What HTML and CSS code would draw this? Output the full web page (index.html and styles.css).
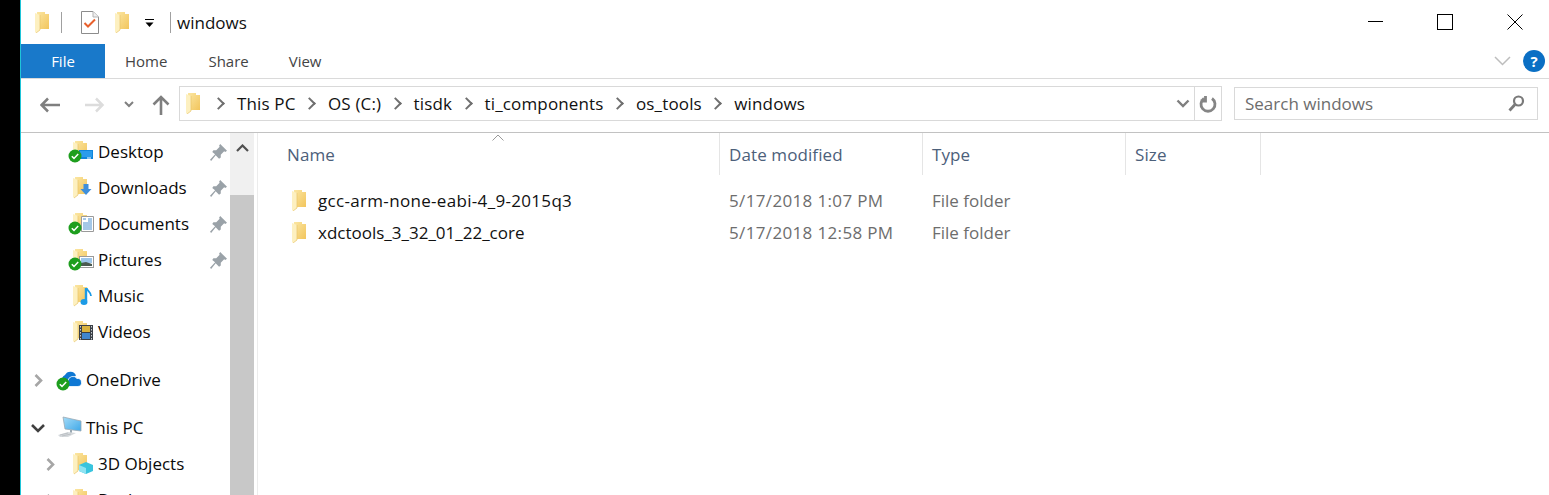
FILE: index.html
```html
<!DOCTYPE html>
<html lang="en">
<head>
    <meta charset="UTF-8">
    <title>windows</title>
    <link rel="stylesheet" href="styles.css">
</head>
<body>
    <svg class="defs" width="0" height="0">
        <defs>
            <linearGradient id="fold" x1="0" y1="0" x2="1" y2="1">
                <stop offset="0" stop-color="#fbe6a2"/>
                <stop offset="1" stop-color="#f2c55c"/>
            </linearGradient>
            <linearGradient id="screen" x1="0" y1="0" x2="1" y2="1">
                <stop offset="0" stop-color="#a5dcf8"/>
                <stop offset="1" stop-color="#3fa8e8"/>
            </linearGradient>
            <g id="folder">
                <path d="M2 0H10V2H14V17H2Z" fill="url(#fold)"/>
                <path d="M0 1L5 3V18L1 21L0 20Z" fill="#fdf0c0"/>
                <path d="M5 3V18L1 21" fill="none" stroke="#e8c468" stroke-width=".7"/>
            </g>
            <g id="check">
                <circle r="6.5" fill="#1e9e1e"/>
                <path d="M-3.200 .2L-1 2.400L3.200-2" fill="none" stroke="#fff" stroke-width="1.500"/>
            </g>
            <path id="pin" d="M9 0L15 6L13.500 7L12.500 6.500L9.500 9.500L9.500 12L8 13L5 10L1 15L0 14L4.500 9L2 7L3 5.500H5.500L8.500 2.500L8 1.500Z" fill="#9aa2a8"/>
            <path id="chev-right" d="M1.500 1L7 6.500L1.500 12" fill="none" stroke="#a6a6a6" stroke-width="2.600"/>
        </defs>
    </svg>

    <div class="edge"></div>
    <div class="window">
        <!-- title bar -->
        <header class="titlebar">
            <svg class="qa-folder" width="14" height="21"><use href="#folder"/></svg>
            <span class="qa-sep"></span>
            <svg class="qa-doc" width="18" height="23" viewBox="0 0 18 23">
                <path d="M.5.500H12L17.500 6V22.500H.5Z" fill="#fff" stroke="#8c8c8c"/>
                <path d="M12 .5V6H17.500" fill="#eee" stroke="#b5b5b5"/>
                <path d="M3.500 12L7 15.500L14 8.500" fill="none" stroke="#e8602c" stroke-width="2"/>
            </svg>
            <svg class="qa-folder2" width="14" height="21"><use href="#folder"/></svg>
            <svg class="qa-drop" width="9" height="9" viewBox="0 0 9 9">
                <path d="M0 .5H9" stroke="#000"/>
                <path d="M.5 3.500H8.500L4.500 8Z" fill="#000"/>
            </svg>
            <span class="qa-sep qa-sep-title"></span>
            <span class="title">windows</span>
            <div class="winbtns">
                <svg width="15" height="15" viewBox="0 0 15 15"><path d="M0 7.500H15" stroke="#000"/></svg>
                <svg width="16" height="16" viewBox="0 0 16 16"><rect x=".5" y=".5" width="15" height="15" fill="none" stroke="#000"/></svg>
                <svg width="16" height="16" viewBox="0 0 16 16"><path d="M.5.500L15.500 15.500M15.500.500L.5 15.500" stroke="#000"/></svg>
            </div>
        </header>

        <!-- ribbon tabs -->
        <nav class="tabs">
            <a class="tab tab-file">File</a>
            <a class="tab tab-home">Home</a>
            <a class="tab tab-share">Share</a>
            <a class="tab tab-view">View</a>
            <svg class="ribbon-chev" width="17" height="10" viewBox="0 0 17 10"><path d="M1 1L8.500 8.500L16 1" fill="none" stroke="#bdbdbd" stroke-width="1.500"/></svg>
            <span class="help">?</span>
        </nav>

        <!-- address bar -->
        <div class="addressbar">
            <div class="navbtns">
                <svg width="20" height="16" viewBox="0 0 20 16"><path d="M20 8H2M8 1.500L1.500 8L8 14.500" fill="none" stroke="#7f7f7f" stroke-width="2.500"/></svg>
                <svg class="nav-fwd" width="20" height="16" viewBox="0 0 20 16"><path d="M0 8H17M11 1.500L17.500 8L11 14.500" fill="none" stroke="#dcdcdc" stroke-width="2.500"/></svg>
                <svg class="nav-down" width="10" height="7" viewBox="0 0 10 7"><path d="M1 1L5 5L9 1" fill="none" stroke="#808080" stroke-width="2"/></svg>
                <svg class="nav-up" width="18" height="20" viewBox="0 0 18 20"><path d="M9 20V3M1.500 9.500L9 2L16.500 9.500" fill="none" stroke="#7f7f7f" stroke-width="2.600"/></svg>
            </div>
            <div class="path">
                <svg class="path-folder" width="14" height="21"><use href="#folder"/></svg>
                <span class="crumb">This PC</span>
                <span class="crumb">OS (C:)</span>
                <span class="crumb">tisdk</span>
                <span class="crumb">ti_components</span>
                <span class="crumb">os_tools</span>
                <span class="crumb">windows</span>
                <svg class="path-drop" width="14" height="9" viewBox="0 0 14 9"><path d="M1.500 1.500L7 7L12.500 1.500" fill="none" stroke="#7f7f7f" stroke-width="2.400"/></svg>
                <span class="refresh">
                    <svg width="18" height="18" viewBox="0 0 18 18"><path d="M5 3.500A7 7 0 1 0 13 3.500M6.500 1V6H1.500" fill="none" stroke="#858585" stroke-width="2.800"/></svg>
                </span>
            </div>
            <div class="search">
                <span>Search windows</span>
                <svg width="17" height="17" viewBox="0 0 17 17"><circle cx="10.500" cy="6" r="4.500" fill="none" stroke="#7a7a7a" stroke-width="2.200"/><path d="M7 9.500L1.500 15.500" stroke="#7a7a7a" stroke-width="2.800"/></svg>
            </div>
        </div>

        <div class="main">
            <!-- navigation pane -->
            <aside class="navpane">
                <div class="tree">
                    <div class="row row-qa">
                        <svg class="ico" width="30" height="26"><use href="#folder" x="5" y="2"/><path d="M11 11H25V20H11Z" fill="#0f86dc"/><path d="M12 12H24V18H12Z" fill="#2a9cec"/><path d="M19 19H23" stroke="#fff"/><use href="#check" x="7" y="17"/></svg>
                        <span>Desktop</span>
                        <svg class="pin" width="17" height="17" viewBox="0 0 15 15"><use href="#pin"/></svg>
                    </div>
                    <div class="row row-qa">
                        <svg class="ico" width="30" height="26"><use href="#folder" x="5" y="2"/><path d="M15.500 9H20.500V14H23.500L18 20L12.500 14H15.500Z" fill="#3f8fdb"/></svg>
                        <span>Downloads</span>
                        <svg class="pin" width="17" height="17" viewBox="0 0 15 15"><use href="#pin"/></svg>
                    </div>
                    <div class="row row-qa">
                        <svg class="ico" width="30" height="26"><use href="#folder" x="5" y="2"/><path d="M13.500 5.500H25.500V20.500H13.500Z" fill="#fff" stroke="#9a9a9a"/><path d="M15 8H18M20 8H24M20 10H24M15 12H24M15 14H24M15 16H24M15 18H24" stroke="#4a90d0"/><use href="#check" x="7" y="17"/></svg>
                        <span>Documents</span>
                        <svg class="pin" width="17" height="17" viewBox="0 0 15 15"><use href="#pin"/></svg>
                    </div>
                    <div class="row row-qa">
                        <svg class="ico" width="30" height="26"><use href="#folder" x="5" y="2"/><rect x="11.500" y="9.500" width="14" height="11" fill="#fff" stroke="#9a9a9a"/><path d="M13 11H24V16H13Z" fill="#9cc6ea"/><path d="M13 19V16L18 15L24 17V19Z" fill="#4a5a50"/><use href="#check" x="7" y="17"/></svg>
                        <span>Pictures</span>
                        <svg class="pin" width="17" height="17" viewBox="0 0 15 15"><use href="#pin"/></svg>
                    </div>
                    <div class="row row-qa">
                        <svg class="ico" width="30" height="26"><use href="#folder" x="5" y="2"/><path d="M18 5V18" stroke="#1c9be6" stroke-width="2.400"/><path d="M18.500 5C20 9 23 9 23 13" fill="none" stroke="#1c9be6" stroke-width="1.800"/><ellipse cx="16" cy="19" rx="3.500" ry="3" fill="#1c9be6"/></svg>
                        <span>Music</span>
                    </div>
                    <div class="row row-qa">
                        <svg class="ico" width="30" height="26"><use href="#folder" x="5" y="2"/><rect x="11" y="6" width="14" height="15" fill="#3a3f46"/><rect x="14" y="7" width="8" height="6" fill="#d9b23e"/><rect x="14" y="14" width="8" height="6" fill="#3f86d0"/><path d="M12.500 7V21M23.500 7V21" stroke="#c9ced4" stroke-dasharray="1.500 1.500"/></svg>
                        <span>Videos</span>
                    </div>

                    <div class="row row-top row-gap">
                        <svg class="chev" width="9" height="13"><use href="#chev-right"/></svg>
                        <svg class="ico" width="30" height="26"><path d="M8 15A4.500 4.500 0 0 1 10 8A6 6 0 0 1 21 8.500L13 13Z" fill="#0f78d4"/><path d="M13 19.500A3 3 0 0 1 13 13.500A5 5 0 0 1 22 11.500A4 4 0 0 1 23 19.500Z" fill="#0f78d4" stroke="#fff" stroke-width=".8"/><use href="#check" x="8" y="17"/></svg>
                        <span>OneDrive</span>
                    </div>
                    <div class="row row-top row-gap">
                        <svg class="chev chev-open" width="14" height="9" viewBox="0 0 14 9"><path d="M1 1L7 7L13 1" fill="none" stroke="#404040" stroke-width="2.600"/></svg>
                        <svg class="ico" width="30" height="26"><path d="M8 2L26 6V16L10 14Z" fill="url(#screen)" stroke="#9aa8b2" stroke-width=".8"/><path d="M16 15V18" stroke="#9aa8b2" stroke-width="2"/><path d="M3 20L13 17L21 18L13 22H5Z" fill="#d6dadd"/><path d="M5 20L13 18M7 21L16 19" stroke="#a9afb4" stroke-width=".6"/></svg>
                        <span>This PC</span>
                    </div>
                    <div class="row row-sub">
                        <svg class="chev" width="9" height="13"><use href="#chev-right"/></svg>
                        <svg class="ico" width="30" height="26"><use href="#folder" x="5" y="2"/><path d="M11 14L18 11L25 14V20L18 23L11 20Z" fill="#39c4de"/><path d="M11 14L18 17V23L11 20Z" fill="#8fe3f2"/></svg>
                        <span>3D Objects</span>
                    </div>
                    <div class="row row-sub">
                        <svg class="chev" width="9" height="13"><use href="#chev-right"/></svg>
                        <svg class="ico" width="30" height="26"><use href="#folder" x="5" y="2"/></svg>
                        <span>Desktop</span>
                    </div>
                </div>
                <div class="scrollbar">
                    <div class="scroll-up">
                        <svg width="13" height="8" viewBox="0 0 13 8"><path d="M1 7L6.500 1.500L12 7" fill="none" stroke="#505050" stroke-width="2.200"/></svg>
                    </div>
                    <div class="scroll-thumb"></div>
                </div>
            </aside>

            <!-- file list -->
            <section class="files">
                <svg class="sort" width="12" height="7" viewBox="0 0 12 7"><path d="M.5 6.500L6 1L11.500 6.500" fill="none" stroke="#9a9a9a"/></svg>
                <div class="cols head">
                    <div class="col-name">Name</div>
                    <div>Date modified</div>
                    <div>Type</div>
                    <div>Size</div>
                </div>
                <div class="cols file">
                    <div class="col-name"><svg width="14" height="21"><use href="#folder"/></svg><span class="wide-name">gcc-arm-none-eabi-4_9-2015q3</span></div>
                    <div class="date">5/17/2018 1:07 PM</div>
                    <div>File folder</div>
                    <div></div>
                </div>
                <div class="cols file">
                    <div class="col-name"><svg width="14" height="21"><use href="#folder"/></svg><span>xdctools_3_32_01_22_core</span></div>
                    <div class="date">5/17/2018 12:58 PM</div>
                    <div>File folder</div>
                    <div></div>
                </div>
            </section>
        </div>
    </div>
</body>
</html>
```

FILE: styles.css
```css
* {
    box-sizing: border-box;
}

html, body {
    height: 495px;
    overflow: hidden;
}

body {
    margin: 0;
    display: flex;
    font-family: "Open Sans", "Noto Sans", sans-serif;
    font-size: 17px;
    color: #111;
    background: #fff;
}

svg {
    display: block;
    flex: none;
}

.defs {
    position: absolute;
}

.edge {
    width: 21px;
    flex: none;
    background: #000;
    border-right: 1px solid #1fc4d8;
}

.window {
    flex: 1;
    min-width: 0;
    display: flex;
    flex-direction: column;
}

/* title bar */
.titlebar {
    height: 44px;
    display: flex;
    align-items: center;
    padding-left: 14px;
}

.qa-sep {
    width: 1px;
    height: 21px;
    background: #a0a0a0;
    margin-left: 12px;
}

.qa-doc {
    margin-left: 19px;
}

.qa-folder2 {
    margin-left: 16px;
}

.qa-drop {
    margin-left: 16px;
    margin-top: 3px;
}

.qa-sep-title {
    margin-left: 16px;
}

.title {
    margin-left: 6px;
    font-size: 17px;
}

.winbtns {
    margin-left: auto;
    display: flex;
    align-items: center;
    gap: 54px;
    padding-right: 26px;
    padding-bottom: 1px;
}

/* ribbon */
.tabs {
    height: 35px;
    display: flex;
    align-items: stretch;
    border-bottom: 1px solid #dadada;
    font-size: 15px;
    color: #444;
}

.tab {
    display: flex;
    align-items: center;
}

.tab-file {
    width: 84px;
    height: 34px;
    justify-content: center;
    background: #1979ca;
    color: #fff;
}

.tab-home {
    margin-left: 20px;
}

.tab-share {
    margin-left: 41px;
}

.tab-view {
    margin-left: 40px;
}

.ribbon-chev {
    margin-left: auto;
    align-self: center;
}

.help {
    width: 22px;
    height: 22px;
    margin: 6px 4px 0 12px;
    border-radius: 50%;
    background: #0a6fc4;
    color: #fff;
    font-weight: 700;
    font-size: 15px;
    line-height: 22px;
    text-align: center;
}

/* address bar */
.addressbar {
    height: 54px;
    display: flex;
    align-items: center;
    border-bottom: 1px solid #c2c2c2;
    padding-bottom: 4px;
}

.navbtns {
    width: 158px;
    display: flex;
    align-items: center;
    padding-left: 19px;
    padding-top: 2px;
    flex: none;
}

.nav-fwd {
    margin-left: 25px;
}

.nav-down {
    margin-left: 19px;
}

.nav-up {
    margin-left: 18px;
}

.path {
    width: 1043px;
    height: 35px;
    flex: none;
    display: flex;
    align-items: center;
    border: 1px solid #d9d9d9;
    padding-left: 6px;
    letter-spacing: .15px;
}

.path-folder {
    margin-right: 14px;
}

.crumb {
    display: flex;
    align-items: center;
    margin-right: 9.400px;
}

.crumb::before {
    content: "";
    width: 7px;
    height: 7px;
    border-top: 2px solid #6f6f6f;
    border-right: 2px solid #6f6f6f;
    transform: rotate(45deg);
    margin-right: 14px;
}

.path-drop {
    margin-left: auto;
    margin-right: 4px;
}

.refresh {
    width: 27px;
    height: 33px;
    border-left: 1px solid #d9d9d9;
    display: flex;
    align-items: center;
    justify-content: center;
}

.search {
    width: 304px;
    height: 33px;
    margin-left: 12px;
    flex: none;
    display: flex;
    align-items: center;
    justify-content: space-between;
    border: 1px solid #d9d9d9;
    padding: 0 12px 0 10px;
    color: #6d6d6d;
}

/* main area */
.main {
    flex: 1;
    min-height: 0;
    display: flex;
}

.navpane {
    width: 237px;
    flex: none;
    display: flex;
    border-right: 1px solid #ececec;
    padding-right: 2px;
}

.tree {
    width: 209px;
    padding-top: 1px;
    flex: none;
}

.row {
    height: 36px;
    display: flex;
    align-items: center;
    color: #0a0a0a;
}

.row span {
    padding-bottom: 2px;
}

.row-gap {
    margin-top: 12px;
}

.row-qa {
    padding-left: 47px;
}

.row-top {
    padding-left: 13px;
}

.row-top span {
    margin-left: 1px;
}

.row-sub {
    padding-left: 25px;
}

.chev {
    width: 21px;
    flex: none;
}

.row-sub .chev {
    width: 22px;
}

.chev-open {
    width: 14px;
    margin-left: -3px;
    margin-right: 10px;
}

.pin {
    margin-left: auto;
    margin-right: 3px;
}

.scrollbar {
    width: 24px;
    flex: none;
    display: flex;
    flex-direction: column;
    background: #f0f0f0;
}

.scroll-up {
    height: 62px;
    display: flex;
    justify-content: center;
    padding-top: 11px;
}

.scroll-thumb {
    flex: 1;
    background: #c8c8c8;
}

/* file list */
.files {
    flex: 1;
    position: relative;
    min-width: 0;
}

.sort {
    position: absolute;
    left: 234px;
    top: 1px;
}

.cols {
    display: grid;
    grid-template-columns: 462px 203px 203px 135px;
}

.cols > div {
    padding-left: 9px;
    display: flex;
    align-items: center;
}

.cols .col-name {
    padding-left: 29px;
}

.head {
    height: 42px;
    margin-bottom: 9px;
    color: #4c607a;
    letter-spacing: .1px;
}

.head > div {
    border-right: 1px solid #e5e5e5;
    height: 42px;
}

.file {
    height: 32px;
    color: #6d6d6d;
}

.file .date {
    letter-spacing: .35px;
}

.file .col-name {
    padding-left: 34px;
    color: #111;
}

.file .col-name span {
    margin-left: 12px;
}

.file .wide-name {
    letter-spacing: .32px;
}
```
